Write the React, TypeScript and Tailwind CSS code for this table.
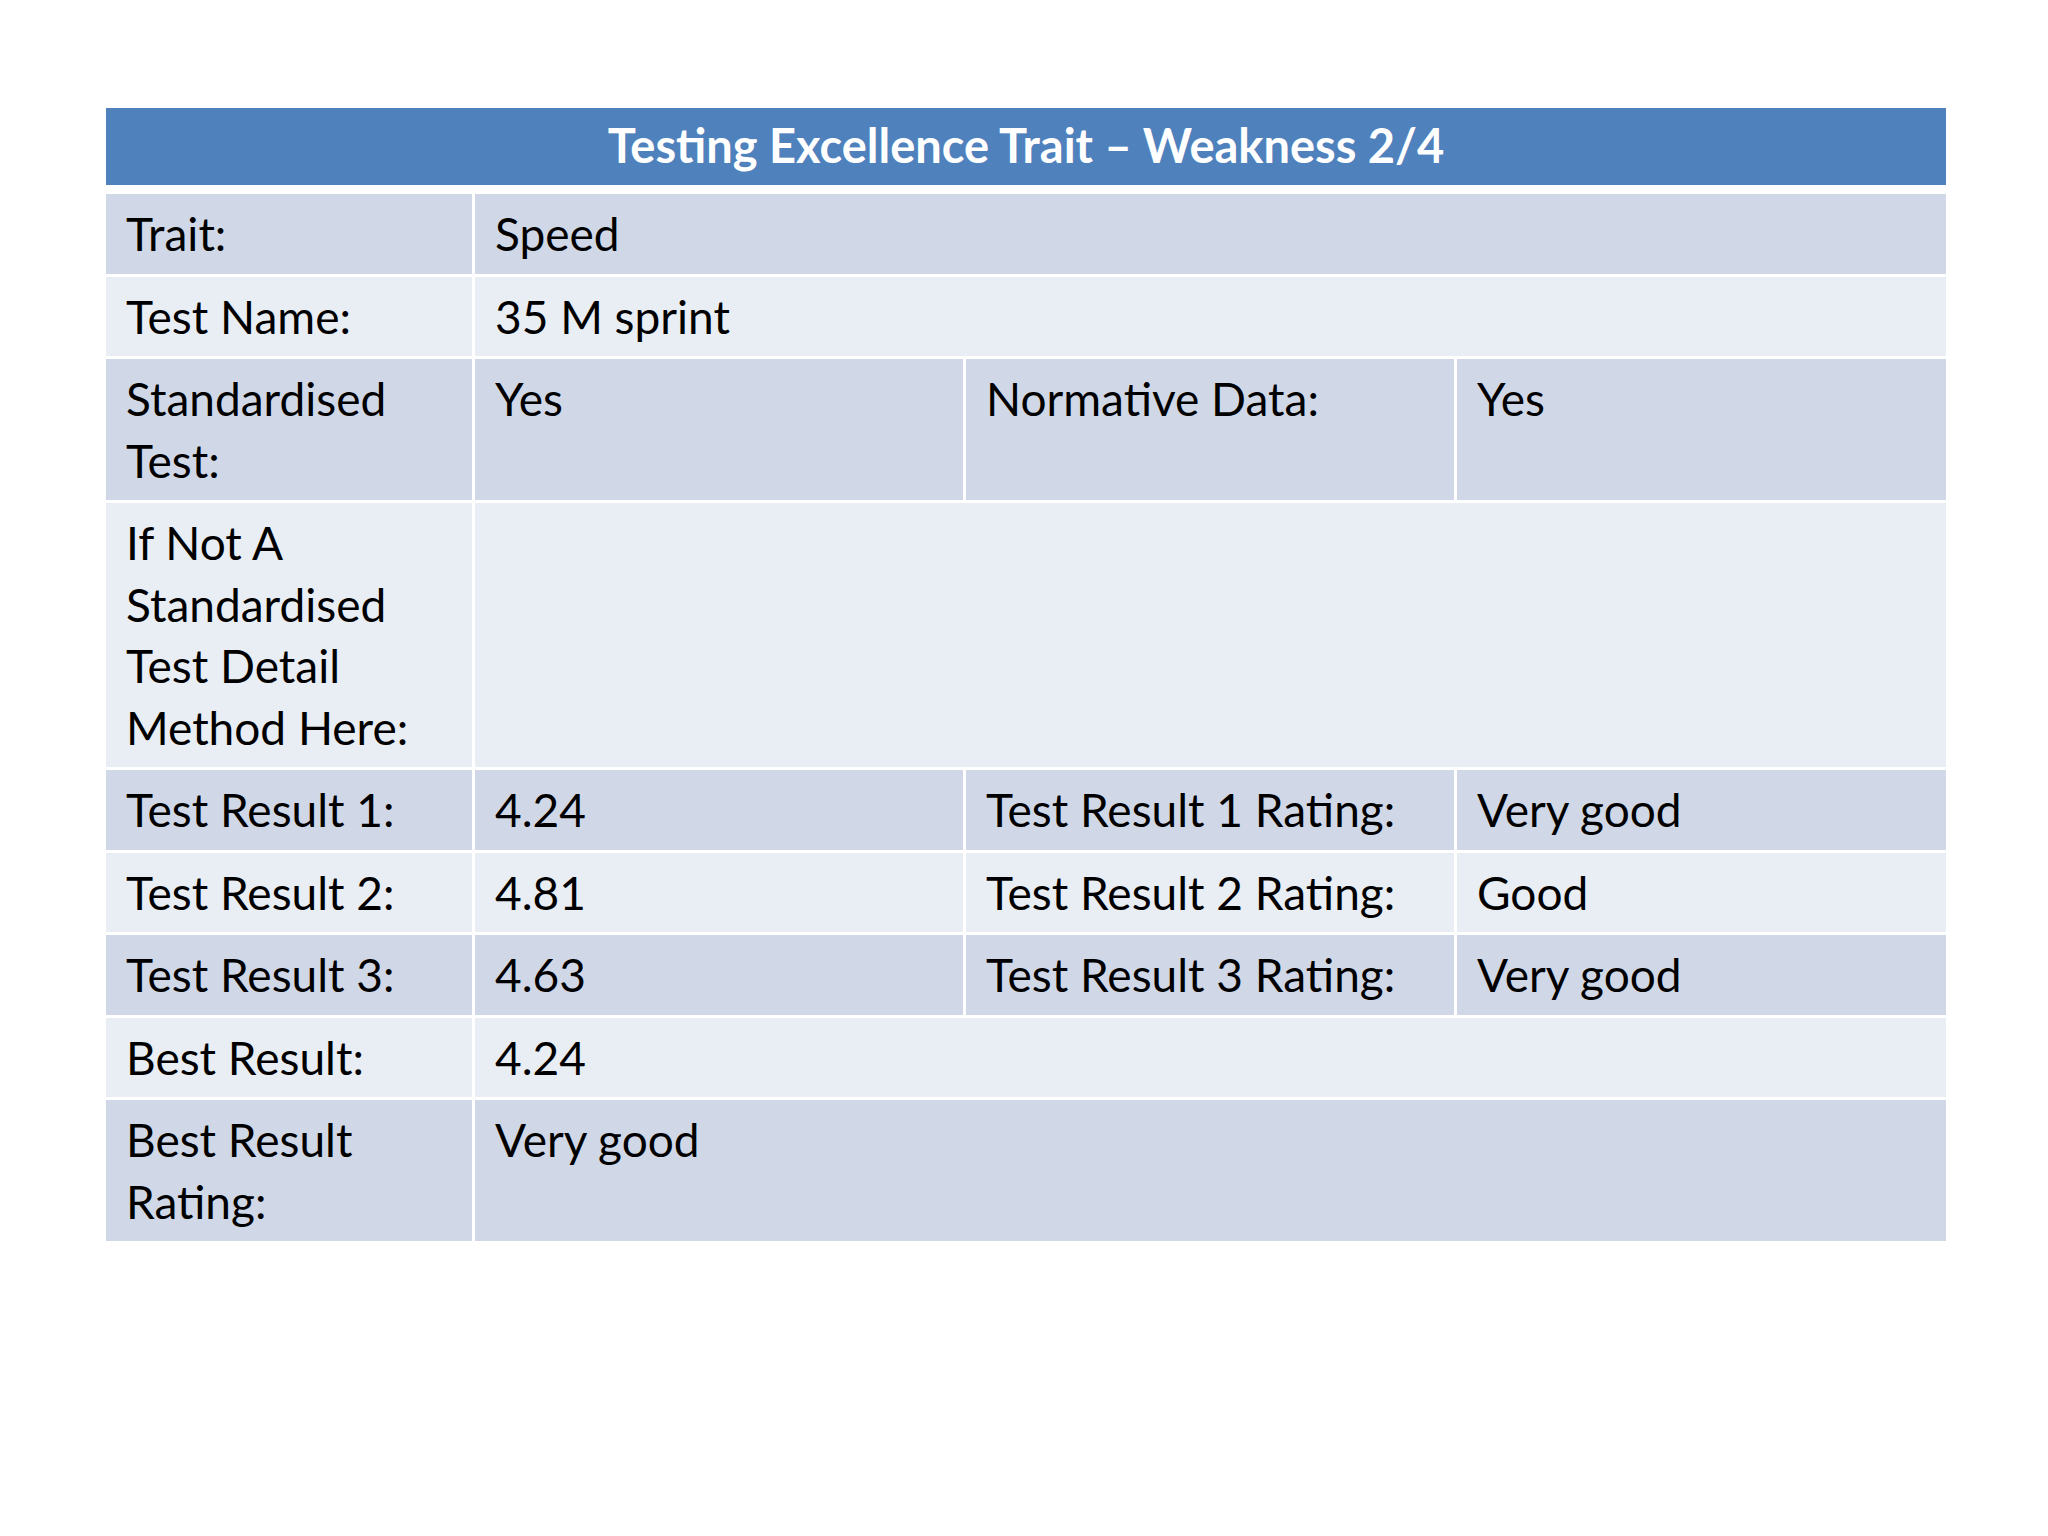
import React from "react";

type Row = {
  cells: { text: string; span?: string }[];
  dark: boolean;
};

const rows: Row[] = [
  { dark: true, cells: [{ text: "Trait:" }, { text: "Speed", span: "col-span-3" }] },
  { dark: false, cells: [{ text: "Test Name:" }, { text: "35 M sprint", span: "col-span-3" }] },
  {
    dark: true,
    cells: [{ text: "Standardised Test:" }, { text: "Yes" }, { text: "Normative Data:" }, { text: "Yes" }],
  },
  {
    dark: false,
    cells: [{ text: "If Not A Standardised Test Detail Method Here:" }, { text: "", span: "col-span-3" }],
  },
  {
    dark: true,
    cells: [{ text: "Test Result 1:" }, { text: "4.24" }, { text: "Test Result 1 Rating:" }, { text: "Very good" }],
  },
  {
    dark: false,
    cells: [{ text: "Test Result 2:" }, { text: "4.81" }, { text: "Test Result 2 Rating:" }, { text: "Good" }],
  },
  {
    dark: true,
    cells: [{ text: "Test Result 3:" }, { text: "4.63" }, { text: "Test Result 3 Rating:" }, { text: "Very good" }],
  },
  { dark: false, cells: [{ text: "Best Result:" }, { text: "4.24", span: "col-span-3" }] },
  { dark: true, cells: [{ text: "Best Result Rating:" }, { text: "Very good", span: "col-span-3" }] },
];

export default function App() {
  return (
    <div
      className="min-h-screen bg-white pt-[108px] pl-[106px] text-black"
      style={{ fontFamily: "Lato, 'Open Sans', sans-serif" }}
    >
      <div className="w-[1840px]">
        {/* header */}
        <div className="h-[77px] bg-[#4f81bd] flex items-center justify-center">
          <h1 className="text-[47px] font-bold text-white leading-none pb-[2px]">
            Testing Excellence Trait – Weakness 2/4
          </h1>
        </div>

        <div className="mt-[9px] grid grid-cols-[366px_488px_488px_1fr] gap-[3px]">
          {rows.map((row, i) =>
            row.cells.map((cell, j) => (
              <div
                key={`${i}-${j}`}
                className={`${cell.span ?? ""} ${
                  row.dark ? "bg-[#d0d8e8]" : "bg-[#e9edf4]"
                } px-5 pt-[9px] pb-[9px] text-[46px] leading-[61.5px]`}
              >
                {cell.text}
              </div>
            ))
          )}
        </div>
      </div>
    </div>
  );
}
